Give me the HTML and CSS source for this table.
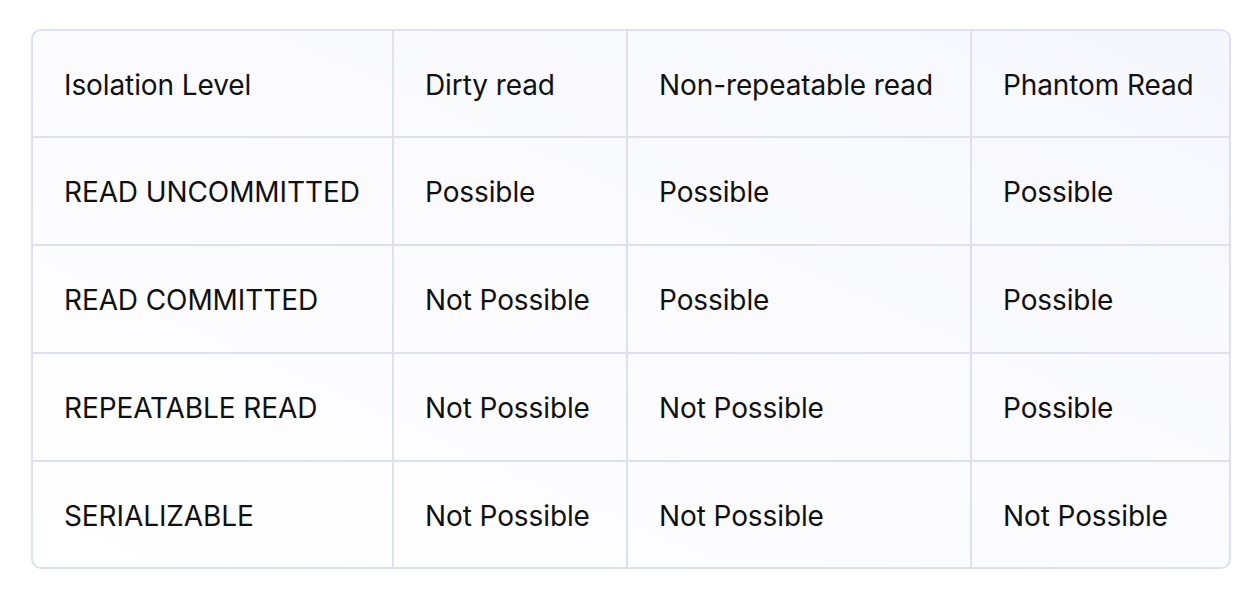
FILE: index.html
```html
<!DOCTYPE html>
<html>
<head>
<meta charset="utf-8">
<link rel="stylesheet" href="styles.css">
</head>
<body>
<div class="page">
  <div class="table-wrap">
    <table class="iso">
      <colgroup>
        <col class="c1"><col class="c2"><col class="c3"><col class="c4">
      </colgroup>
      <tr><td>Isolation Level</td><td>Dirty read</td><td>Non-repeatable read</td><td>Phantom Read</td></tr>
      <tr><td>READ UNCOMMITTED</td><td>Possible</td><td>Possible</td><td>Possible</td></tr>
      <tr><td>READ COMMITTED</td><td>Not Possible</td><td>Possible</td><td>Possible</td></tr>
      <tr><td>REPEATABLE READ</td><td>Not Possible</td><td>Not Possible</td><td>Possible</td></tr>
      <tr><td>SERIALIZABLE</td><td>Not Possible</td><td>Not Possible</td><td>Not Possible</td></tr>
    </table>
  </div>
</div>
</body>
</html>
```
FILE: styles.css
```css
html, body {
  margin: 0;
  padding: 0;
  background: #ffffff;
}
.page {
  padding: 29px 21px 0 31px;
}
.table-wrap {
  border: 2px solid #dde0f1;
  border-radius: 10px;
  overflow: hidden;
  background: linear-gradient(to top right, #ffffff 0%, #fbfbfe 50%, #f6f7fd 100%);
}
.iso {
  width: 100%;
  border-collapse: collapse;
  table-layout: fixed;
  font-family: Inter, "Liberation Sans", sans-serif;
  font-size: 28px;
  letter-spacing: -0.1px;
  color: #111111;
}
.c1 { width: 360px; }
.c2 { width: 234px; }
.c3 { width: 344px; }
.c4 { width: auto; }
.iso td {
  height: 108px;
  padding: 2px 0 0 31px;
  box-sizing: border-box;
  border-right: 2px solid #dde0f1;
  border-bottom: 2px solid #dde0f1;
  vertical-align: middle;
  line-height: 36px;
  white-space: nowrap;
}
.iso tr:first-child td { height: 106px; }
.iso tr:last-child td { height: 106px; }
.iso td:last-child { border-right: none; }
.iso tr:last-child td { border-bottom: none; }
```
